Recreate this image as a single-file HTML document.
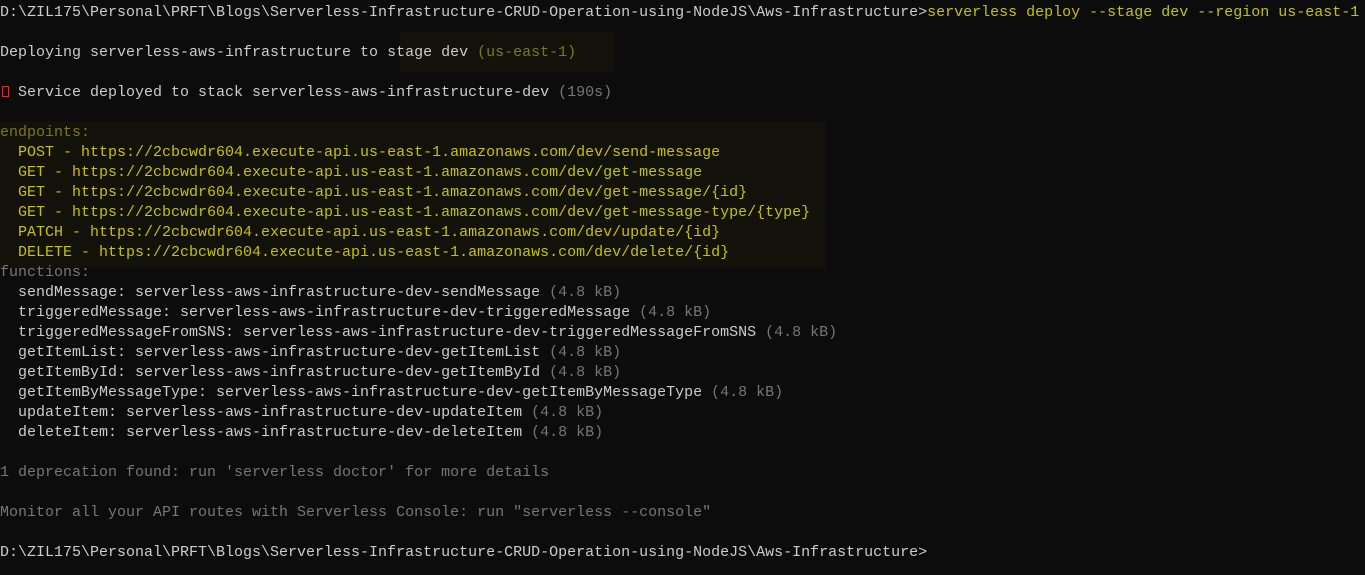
<!DOCTYPE html>
<html><head><meta charset="utf-8"><style>
html,body{margin:0;padding:0;background:#0c0c0c;width:1365px;height:575px;overflow:hidden}
.t{position:absolute;left:0;top:3px;font-family:"Liberation Mono",monospace;font-size:15px;line-height:20px;color:#cccccc;white-space:pre}
.y{color:#c4c400}.o{color:#7a7a12}.g{color:#767676}
.bx1{position:absolute;left:400px;top:32px;width:215px;height:40px;background:#12110a}
.bx2{position:absolute;left:0;top:122px;width:826px;height:146px;background:#12110a}
.r{display:inline-block;width:7px;height:11px;border:1px solid #c33;box-sizing:border-box;vertical-align:-1px;margin-left:2px}
</style></head><body>
<div class="bx1"></div><div class="bx2"></div>
<div class="t">D:\ZIL175\Personal\PRFT\Blogs\Serverless-Infrastructure-CRUD-Operation-using-NodeJS\Aws-Infrastructure&gt;<span class="y">serverless deploy --stage dev --region us-east-1</span>

Deploying serverless-aws-infrastructure to stage dev <span class="o">(us-east-1)</span>

<span class="r"></span> Service deployed to stack serverless-aws-infrastructure-dev <span class="g">(190s)</span>

<span class="o">endpoints:</span>
<span class="y">  POST - https://2cbcwdr604.execute-api.us-east-1.amazonaws.com/dev/send-message
  GET - https://2cbcwdr604.execute-api.us-east-1.amazonaws.com/dev/get-message
  GET - https://2cbcwdr604.execute-api.us-east-1.amazonaws.com/dev/get-message/{id}
  GET - https://2cbcwdr604.execute-api.us-east-1.amazonaws.com/dev/get-message-type/{type}
  PATCH - https://2cbcwdr604.execute-api.us-east-1.amazonaws.com/dev/update/{id}
  DELETE - https://2cbcwdr604.execute-api.us-east-1.amazonaws.com/dev/delete/{id}</span>
<span class="g">functions:</span>
  sendMessage: serverless-aws-infrastructure-dev-sendMessage <span class="g">(4.8 kB)</span>
  triggeredMessage: serverless-aws-infrastructure-dev-triggeredMessage <span class="g">(4.8 kB)</span>
  triggeredMessageFromSNS: serverless-aws-infrastructure-dev-triggeredMessageFromSNS <span class="g">(4.8 kB)</span>
  getItemList: serverless-aws-infrastructure-dev-getItemList <span class="g">(4.8 kB)</span>
  getItemById: serverless-aws-infrastructure-dev-getItemById <span class="g">(4.8 kB)</span>
  getItemByMessageType: serverless-aws-infrastructure-dev-getItemByMessageType <span class="g">(4.8 kB)</span>
  updateItem: serverless-aws-infrastructure-dev-updateItem <span class="g">(4.8 kB)</span>
  deleteItem: serverless-aws-infrastructure-dev-deleteItem <span class="g">(4.8 kB)</span>

<span class="g">1 deprecation found: run 'serverless doctor' for more details</span>

<span class="g">Monitor all your API routes with Serverless Console: run "serverless --console"</span>

D:\ZIL175\Personal\PRFT\Blogs\Serverless-Infrastructure-CRUD-Operation-using-NodeJS\Aws-Infrastructure&gt;</div>
</body></html>
